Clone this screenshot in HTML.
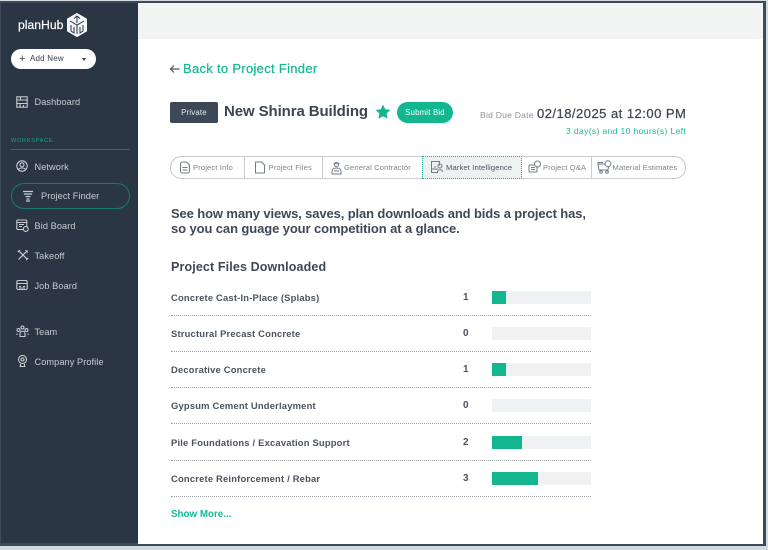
<!DOCTYPE html>
<html><head><meta charset="utf-8"><style>
*{box-sizing:border-box}
html,body{margin:0;padding:0}
body{width:768px;height:550px;overflow:hidden;background:#d5dade;position:relative;font-family:"Liberation Sans",sans-serif}
.a{position:absolute;white-space:nowrap}
.nav{position:absolute;left:34.5px;color:#c6ccd2;font-size:9.2px;letter-spacing:.08px;line-height:12px}
.ic{position:absolute;fill:none;stroke:#c6ccd2;stroke-width:1.1}
.tab{position:absolute;top:156px;height:23px;border:1px solid #c9cdd2;border-left:0;color:#7f868f;font-size:7.6px;letter-spacing:.13px;line-height:22px;white-space:nowrap;background:#fff}
.tab svg{position:absolute;fill:none;stroke:#737b85;stroke-width:1}
.tab span{position:absolute;top:0}
.row{position:absolute;left:171px;color:#4a5360;font-size:9.4px;font-weight:bold;letter-spacing:.2px;line-height:12px;white-space:nowrap}
.n{position:absolute;left:463px;color:#4a5360;font-size:10px;font-weight:bold;line-height:12px}
.bar{position:absolute;left:492px;width:99px;height:13px;background:#f0f1f3}
.bar i{display:block;height:13px;background:#13b68f}
.line{position:absolute;left:171px;width:420px;border-top:1px dotted #9aa0a6;height:0}
</style></head><body>
<div class="a" style="left:0;top:1px;width:766px;height:545px;background:#2a3644;border:solid #3d4a5a;border-width:2px 3px 3px 1px"></div>
<div class="a" style="left:138px;top:3px;width:625px;height:541px;background:#fff"></div>
<div class="a" style="left:138px;top:3px;width:625px;height:36px;background:#f3f5f5"></div>

<div class="a" style="left:18px;top:17px;color:#fff;font-size:12.2px;-webkit-text-stroke:.2px #fff;line-height:17px">planHub</div>
<svg class="a" style="left:66px;top:12px" width="22" height="26" viewBox="0 0 22 26"><path d="M11 1.500 20.500 7v12L11 24.500 1.500 19V7Z" fill="#f3f4f5" stroke="#fff"/><path d="M11 4v7M8 6.500 11 4l3 2.500M4 9l7 4 7-4M11 13v9M5 13v6l3 2v-6M17 13v6l-3 2v-6" fill="none" stroke="#2a3644" stroke-width="1"/></svg>

<div class="a" style="left:11px;top:49px;width:85px;height:20px;border-radius:10px;background:#fff"></div>
<div class="a" style="left:19px;top:53px;color:#39424e;font-size:11px;line-height:12px">+</div>
<div class="a" style="left:30px;top:53px;color:#39424e;font-size:8px;letter-spacing:.2px;line-height:12px">Add New</div>
<div class="a" style="left:82px;top:58px;width:0;height:0;border:2.500px solid transparent;border-top:3px solid #39424e"></div>

<svg class="ic" style="left:16px;top:96px" width="12" height="12" viewBox="0 0 12 12"><rect x=".8" y=".8" width="10.400" height="10.400"/><path d="M.8 4h10.400M4.500.8V4M.8 7.500h10.400M4 7.500v3.700M7.500 9v2"/></svg>
<div class="nav" style="top:96px">Dashboard</div>

<div class="a" style="left:11px;top:137px;color:#13a583;font-size:5.600px;letter-spacing:.7px;line-height:8px">WORKSPACE</div>
<div class="a" style="left:11px;top:149px;width:119px;height:1px;background:#1b7a6d"></div>

<svg class="ic" style="left:16px;top:160px" width="12" height="12" viewBox="0 0 12 12"><circle cx="6" cy="6" r="5.200"/><circle cx="6" cy="4.800" r="2"/><path d="M2.500 9.500c1-2 6-2 7 0"/></svg>
<div class="nav" style="top:161px">Network</div>

<div class="a" style="left:11px;top:183px;width:119px;height:26px;border:1px solid #1b7a6d;border-radius:13px"></div>
<svg class="ic" style="left:22px;top:190px" width="12" height="12" viewBox="0 0 12 12"><path d="M1 1.500h10M2 4h8M3.500 6.500h5M4.500 9h3M4 11h4" stroke-width="1.300"/></svg>
<div class="nav" style="top:190px;left:41px">Project Finder</div>

<svg class="ic" style="left:16px;top:219px" width="13" height="13" viewBox="0 0 13 13"><rect x=".8" y="1" width="10" height="9.500" rx="1"/><path d="M.8 3.500h10M3 5.500h5M3 7.500h3"/><circle cx="9.800" cy="10" r="2.400" fill="#2a3644"/></svg>
<div class="nav" style="top:220px">Bid Board</div>

<svg class="ic" style="left:17px;top:249px" width="12" height="12" viewBox="0 0 12 12"><path d="M1.500 1.500 10.500 10.500M10.500 1.500 1.500 10.500M.8 3l2-2M9.200 11l2-2M8.500 1l2.500 2.500" stroke-width="1.200"/></svg>
<div class="nav" style="top:250px">Takeoff</div>

<svg class="ic" style="left:16px;top:279px" width="12" height="12" viewBox="0 0 12 12"><rect x=".8" y="1.500" width="10.400" height="9" rx="1.500"/><path d="M.8 4.500h10.400M3 7.500h2M7 7.500h2M3 9h6"/></svg>
<div class="nav" style="top:280px">Job Board</div>

<svg class="ic" style="left:16px;top:325px" width="13" height="13" viewBox="0 0 13 13"><circle cx="6.500" cy="2.500" r="1.500"/><circle cx="2.500" cy="5" r="1.500"/><circle cx="10.500" cy="5" r="1.500"/><path d="M4 11.500v-3c0-3 5-3 5 0v3ZM1 10V8.500M12 10V8.500"/></svg>
<div class="nav" style="top:326px">Team</div>

<svg class="ic" style="left:17px;top:355px" width="11" height="13" viewBox="0 0 11 13"><circle cx="5.500" cy="4.500" r="4"/><circle cx="5.500" cy="4.500" r="1.500"/><path d="M2.500 11.500h6M3.500 9v2.500M7.500 9v2.500"/></svg>
<div class="nav" style="top:356px">Company Profile</div>

<svg class="a" style="left:169px;top:63px" width="12" height="12" viewBox="0 0 12 12"><path d="M10.500 6H1.500M5 2.500 1.500 6 5 9.500" fill="none" stroke="#4a5360" stroke-width="1.200"/></svg>
<div class="a" style="left:183px;top:61px;color:#17b994;font-size:13px;letter-spacing:.3px;-webkit-text-stroke:.25px #17b994;line-height:16px">Back to Project Finder</div>

<div class="a" style="left:170px;top:102px;width:48px;height:21px;background:#3c4857;border-radius:2px;color:#e6e8ea;font-size:7.800px;line-height:21px;text-align:center;letter-spacing:.2px">Private</div>
<div class="a" style="left:224px;top:102px;color:#3c4653;font-size:15px;font-weight:bold;letter-spacing:-.1px;line-height:20px">New Shinra Building</div>
<svg class="a" style="left:375px;top:104px" width="16" height="15" viewBox="0 0 16 15"><path d="M8 .5l2.200 4.800 5.300.6-3.900 3.600 1 5.200L8 12.200 3.400 14.700l1-5.200L.5 5.900l5.300-.6Z" fill="#13b68f"/></svg>
<div class="a" style="left:397px;top:102px;width:56px;height:21px;background:#13b68f;border-radius:11px;color:#fff;font-size:7.800px;line-height:21px;text-align:center;letter-spacing:.2px">Submit Bid</div>

<div class="a" style="left:480px;top:109px;color:#8e949b;font-size:8.600px;letter-spacing:.22px;line-height:12px">Bid Due Date</div>
<div class="a" style="left:537px;top:105px;color:#3c4653;font-size:13px;letter-spacing:.48px;-webkit-text-stroke:.25px #3c4653;line-height:17px">02/18/2025 at 12:00 PM</div>
<div class="a" style="left:566px;top:126px;color:#17b994;font-size:8.500px;letter-spacing:.38px;line-height:11px">3 day(s) and 10 hours(s) Left</div>

<div class="a" style="left:170px;top:156px;width:516px;height:23px;border:1px solid #c9cdd2;border-radius:12px;background:#fff"></div>
<div class="tab" style="left:244px;width:79px;border-left:1px solid #c9cdd2"><svg style="left:9px;top:4px" width="12" height="13" viewBox="0 0 12 13"><path d="M1.500 1h6l3 3v8h-9Z"/></svg><span style="left:23.500px">Project Files</span></div>
<div class="tab" style="left:170px;width:75px;border-left:1px solid #c9cdd2;border-radius:12px 0 0 12px"><svg style="left:8px;top:4px" width="12" height="13" viewBox="0 0 12 13"><path d="M1.500 3a2 2 0 0 1 2-2h4l3 3v6a2 2 0 0 1-2 2h-5a2 2 0 0 1-2-2ZM3.500 6.500h5M3.500 9h5"/></svg><span style="left:22px">Project Info</span></div>
<div class="tab" style="left:322px;width:101px;border-left:1px solid #c9cdd2"><svg style="left:8px;top:4px" width="11" height="14" viewBox="0 0 11 14"><circle cx="5.500" cy="3.500" r="2.200"/><path d="M2.500 2.800h6M1 13v-3c0-2 2-3 4.500-3S10 8 10 10v3ZM3 10h5"/></svg><span style="left:21px">General Contractor</span></div>
<div class="tab" style="left:422px;width:100px;background:#eef1f1;border:1px dotted #20a98a;color:#4a5360;z-index:2"><svg style="left:7px;top:3px" width="14" height="14" viewBox="0 0 14 14" stroke="#4a5360"><path d="M8 12.500H1.500v-11h8v4M3 10V8M5 10V6M7 10V8"/><circle cx="10" cy="6" r="2"/><path d="M7.500 12c0-3 5-3 5 0"/></svg><span style="left:23px">Market Intelligence</span></div>
<div class="tab" style="left:521px;width:71px;border-left:1px solid #c9cdd2"><svg style="left:6px;top:3px" width="14" height="14" viewBox="0 0 14 14"><rect x="1" y="5" width="8" height="7" rx="1"/><path d="M3 7.500h4M3 9.500h4"/><circle cx="9.500" cy="4" r="3" fill="#fff"/></svg><span style="left:21px">Project Q&amp;A</span></div>
<div class="tab" style="left:591px;width:95px;border-left:1px solid #c9cdd2;border-radius:0 12px 12px 0"><svg style="left:5px;top:3px" width="16" height="14" viewBox="0 0 16 14"><path d="M1 4h11l-1 6H2ZM1 4V2.500h5"/><circle cx="4" cy="12" r="1.300"/><circle cx="10" cy="12" r="1.300"/><circle cx="11" cy="3.800" r="3" fill="#fff"/></svg><span style="left:20.500px">Material Estimates</span></div>

<div class="a" style="left:171px;top:206px;color:#3f4956;font-size:13px;font-weight:bold;letter-spacing:-.12px;line-height:15px">See how many views, saves, plan downloads and bids a project has,</div>
<div class="a" style="left:171px;top:221px;color:#3f4956;font-size:13px;font-weight:bold;letter-spacing:-.1px;line-height:15px">so you can guage your competition at a glance.</div>

<div class="a" style="left:171px;top:259px;color:#3f4956;font-size:12.500px;font-weight:bold;letter-spacing:.13px;line-height:16px">Project Files Downloaded</div>

<div class="row" style="top:292px">Concrete Cast-In-Place (Splabs)</div><div class="n" style="top:292px">1</div><div class="bar" style="top:291px"><i style="width:14px"></i></div><div class="line" style="top:315px"></div>
<div class="row" style="top:328px">Structural Precast Concrete</div><div class="n" style="top:328px">0</div><div class="bar" style="top:327px"></div><div class="line" style="top:351px"></div>
<div class="row" style="top:364px">Decorative Concrete</div><div class="n" style="top:364px">1</div><div class="bar" style="top:363px"><i style="width:14px"></i></div><div class="line" style="top:387px"></div>
<div class="row" style="top:400px">Gypsum Cement Underlayment</div><div class="n" style="top:400px">0</div><div class="bar" style="top:399px"></div><div class="line" style="top:423px"></div>
<div class="row" style="top:437px">Pile Foundations / Excavation Support</div><div class="n" style="top:437px">2</div><div class="bar" style="top:436px"><i style="width:30px"></i></div><div class="line" style="top:460px"></div>
<div class="row" style="top:473px">Concrete Reinforcement / Rebar</div><div class="n" style="top:473px">3</div><div class="bar" style="top:472px"><i style="width:46px"></i></div><div class="line" style="top:496px"></div>

<div class="a" style="left:171px;top:509px;color:#17b994;font-size:9.800px;font-weight:bold;letter-spacing:0;line-height:12px">Show More...</div>
</body></html>
